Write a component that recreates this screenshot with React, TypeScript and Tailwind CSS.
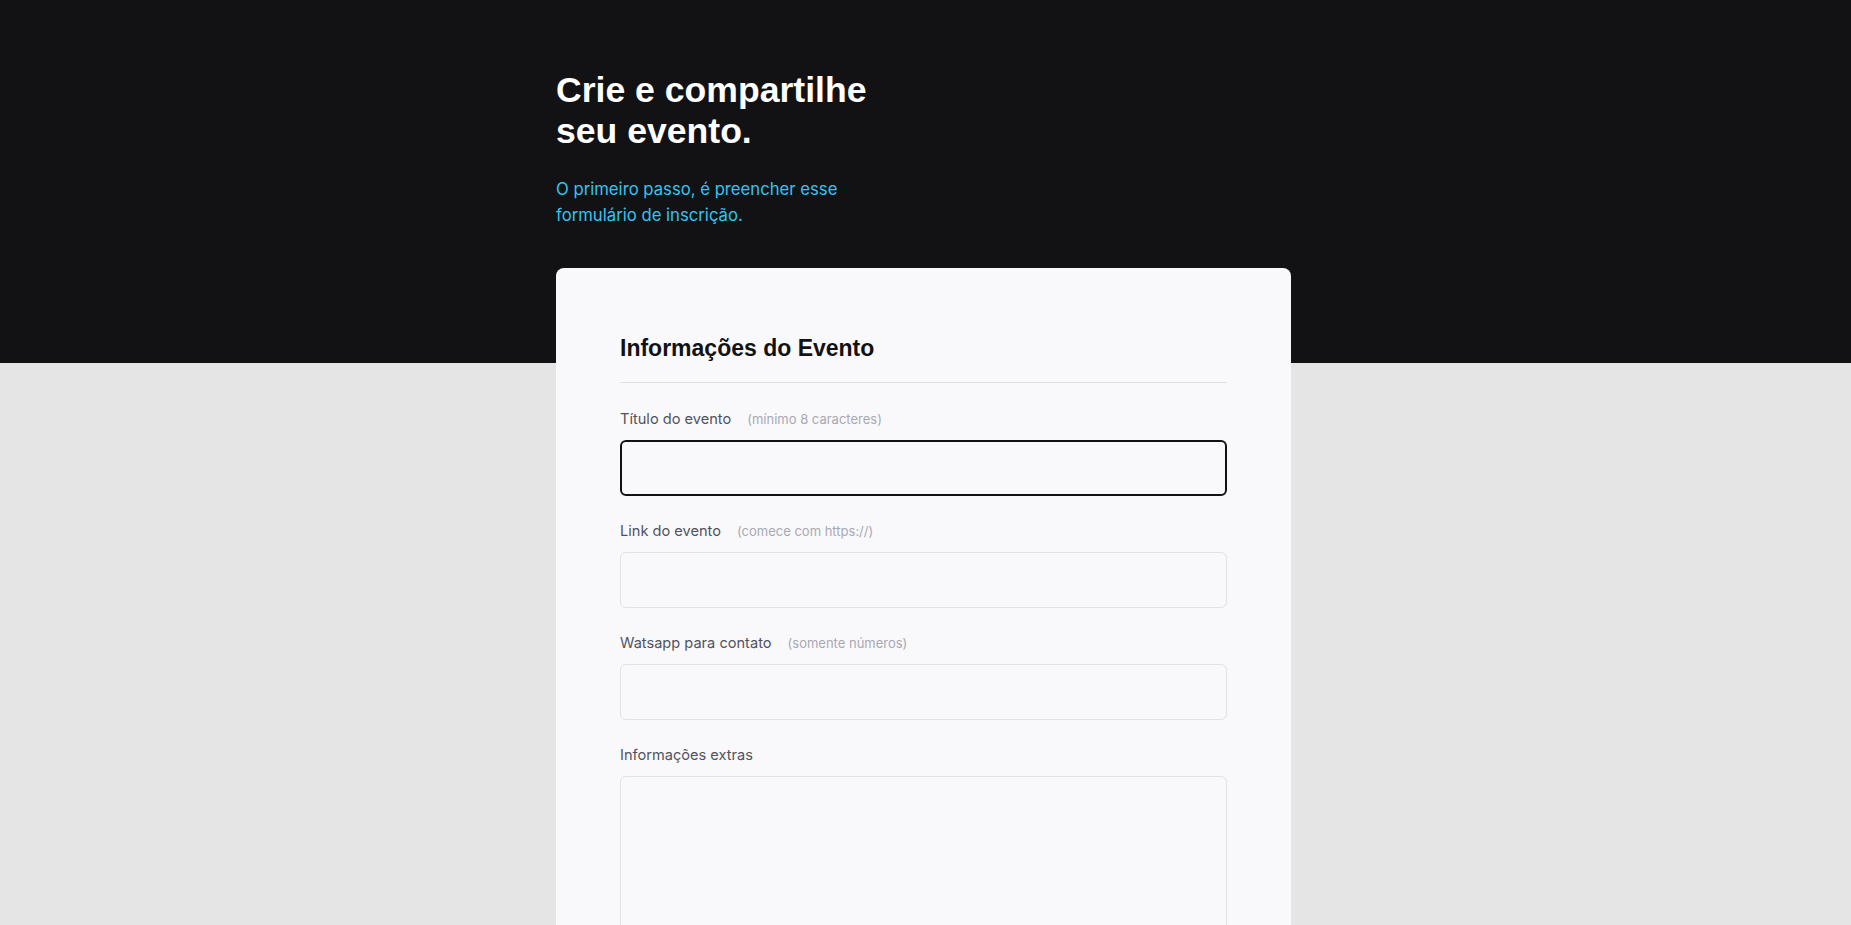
import React from "react";

const sans = "font-['Inter',_'Open_Sans',_sans-serif]";
const display = "font-['Liberation_Sans',_Arial,_sans-serif]";

interface FieldProps {
  label: string;
  hint?: string;
  focused?: boolean;
  multiline?: boolean;
}

function Field({ label, hint, focused = false, multiline = false }: FieldProps) {
  const base =
    "w-full rounded-md bg-[#f9f9fb] outline-none text-[15px] text-[#121214] px-4";
  const border = focused
    ? "border-2 border-[#121214]"
    : "border border-[#e1e1e6]";

  return (
    <div className="flex flex-col">
      <label className="flex items-center h-6 mb-2 text-[14.6px] text-[#52525e]">
        {label}
        {hint && (
          <span className="ml-4 text-[13px] text-[#a8a8b3]">{hint}</span>
        )}
      </label>
      {multiline ? (
        <textarea className={`${base} ${border} h-[220px] py-3 resize-none`} />
      ) : (
        <input type="text" className={`${base} ${border} h-14`} />
      )}
    </div>
  );
}

export default function App() {
  return (
    <div className={`min-h-screen bg-[#e5e5e5] pr-1 ${sans}`}>
      {/* Cabeçalho escuro */}
      <header className="bg-[#121214] h-[363px] -mr-1">
        <div className="w-[735px] mx-auto pt-[70px] -translate-x-0.5">
          <h1
            className={`${display} text-white font-bold text-[35.6px] leading-[41px]`}
          >
            Crie e compartilhe
            <br />
            seu evento.
          </h1>
          <p className="mt-6 text-[#33c5f0] text-[16.7px] leading-[26px]">
            O primeiro passo, é preencher esse
            <br />
            formulário de inscrição.
          </p>
        </div>
      </header>

      {/* Formulário */}
      <main className="w-[735px] mx-auto -mt-[95px] pb-16">
        <form className="bg-[#f9f9fb] rounded-lg px-16 pt-16 pb-16">
          <h2
            className={`${display} font-bold text-[23px] leading-8 text-[#121214] pb-[18px] border-b border-[#e1e1e6]`}
          >
            Informações do Evento
          </h2>

          <div className="flex flex-col gap-6 mt-[25px]">
            <Field
              label="Título do evento"
              hint="(mínimo 8 caracteres)"
              focused
            />
            <Field label="Link do evento" hint="(comece com https://)" />
            <Field label="Watsapp para contato" hint="(somente números)" />
            <Field label="Informações extras" multiline />
          </div>
        </form>
      </main>
    </div>
  );
}
